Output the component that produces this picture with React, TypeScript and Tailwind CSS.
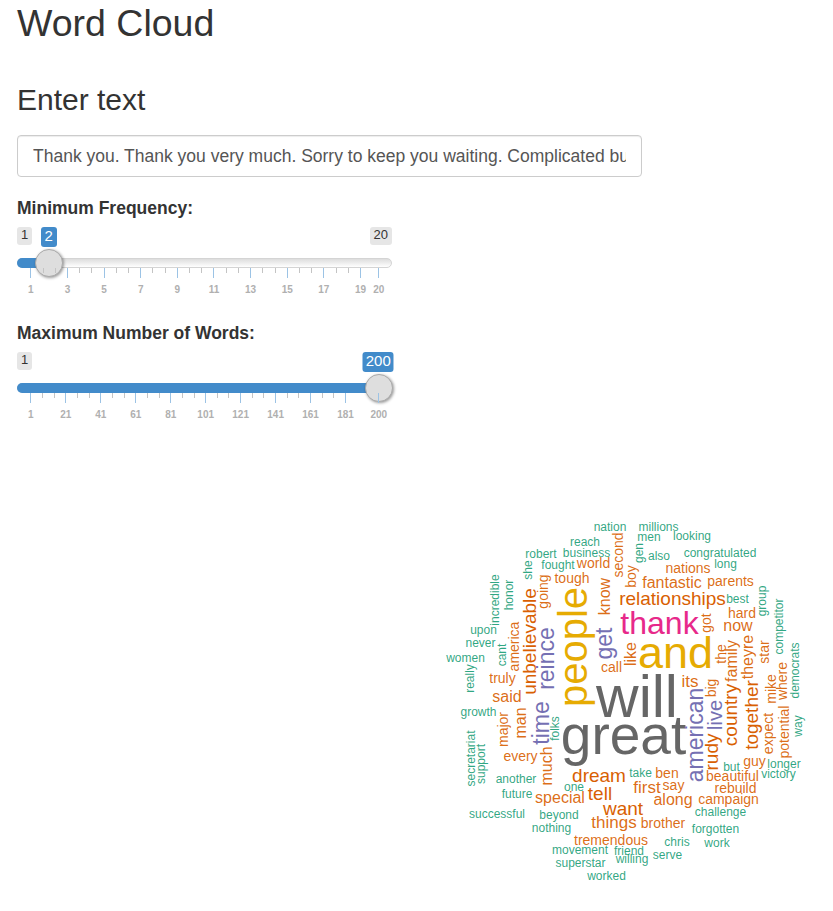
type Word = [string, number, number, number, string];

const G = "#1B9E77";
const O = "#D95F02";
const P = "#7570B3";

// [text, center x, baseline y, font size, colour]
const FLAT: Word[] = [
  ["nation", 610, 531, 12, G],
  ["millions", 658.5, 531, 12, G],
  ["men", 649, 541, 12, G],
  ["looking", 692, 540, 12, G],
  ["reach", 585, 546, 12, G],
  ["robert", 541, 558, 12, G],
  ["business", 586.5, 557, 12, G],
  ["fought", 558, 569, 12, G],
  ["world", 593.5, 568, 14, O],
  ["tough", 572, 583, 14, O],
  ["also", 659, 560, 12, G],
  ["congratulated", 720, 557, 12, G],
  ["long", 725.5, 568, 12, G],
  ["nations", 688, 573, 14, O],
  ["fantastic", 672, 588, 16, O],
  ["parents", 730.5, 586, 14, O],
  ["relationships", 672.5, 605, 19, O],
  ["best", 737.5, 603, 12, G],
  ["hard", 742, 618, 14, O],
  ["now", 738, 631, 16, O],
  ["thank", 659.5, 634, 32, "#E7298A"],
  ["and", 675.5, 668, 45, "#E6AB02"],
  ["its", 690, 687, 17, O],
  ["upon", 483.5, 634, 12, G],
  ["never", 480.5, 647, 12, G],
  ["women", 465.5, 662, 12, G],
  ["call", 611.5, 672, 14, O],
  ["truly", 502.5, 683, 14, O],
  ["said", 507, 702, 16, O],
  ["growth", 478.5, 716, 12, G],
  ["every", 520.5, 761, 14, O],
  ["another", 516, 783, 12, G],
  ["future", 517, 798, 12, G],
  ["one", 574, 791, 12, G],
  ["dream", 599, 782, 19, O],
  ["tell", 600, 800, 19, O],
  ["special", 560, 803, 16, O],
  ["want", 623, 815, 19, O],
  ["things", 614, 828, 17, O],
  ["successful", 497, 818, 12, G],
  ["beyond", 559, 819, 12, G],
  ["nothing", 551.5, 832, 12, G],
  ["tremendous", 611, 845, 14, O],
  ["movement", 580, 854, 12, G],
  ["friend", 629, 855, 12, G],
  ["willing", 632, 863, 12, G],
  ["superstar", 580.5, 867, 12, G],
  ["worked", 606.5, 880, 12, G],
  ["take", 640.5, 777, 12, G],
  ["ben", 667, 778, 14, O],
  ["first", 647, 793, 17, O],
  ["say", 673.5, 790, 14, O],
  ["along", 673, 805, 16, O],
  ["campaign", 728.5, 804, 14, O],
  ["brother", 663, 828, 14, O],
  ["rebuild", 735.5, 793, 14, O],
  ["beautiful", 732.5, 781, 14, O],
  ["guy", 754.5, 766, 14, O],
  ["but", 731.5, 771, 12, G],
  ["longer", 784, 768, 12, G],
  ["victory", 778.5, 778, 12, G],
  ["challenge", 720.5, 816, 12, G],
  ["forgotten", 715.5, 833, 12, G],
  ["chris", 677, 846, 12, G],
  ["work", 717, 847, 12, G],
  ["serve", 667.5, 859, 12, G],
  ["great", 623.5, 754, 55, "#666666"],
  ["will", 637, 717, 59, "#666666"],
];

// [text, baseline x, center y, font size, colour] - read upward
const UPRIGHT: Word[] = [
  ["second", 623, 555, 14, O],
  ["gen", 643, 553, 12, G],
  ["boy", 636, 576.5, 14, O],
  ["she", 532, 570, 12, G],
  ["incredible", 499, 600, 12, G],
  ["honor", 513, 595, 12, G],
  ["going", 548, 591.5, 14, O],
  ["unbelievable", 536, 641.5, 19, O],
  ["people", 587, 647, 40, "#E6AB02"],
  ["reince", 554, 658.5, 23, P],
  ["america", 519, 646.5, 14, O],
  ["cant", 506, 655, 12, G],
  ["really", 474, 678.5, 12, G],
  ["know", 610, 596.5, 16, O],
  ["get", 612, 643.5, 23, P],
  ["like", 636, 654, 16, O],
  ["got", 711, 623, 14, O],
  ["the", 726, 654, 14, O],
  ["family", 737, 661, 16, O],
  ["country", 737, 715, 19, O],
  ["theyre", 753, 657, 16, O],
  ["together", 758, 715, 19, O],
  ["star", 769, 652, 14, O],
  ["mike", 776, 689, 14, O],
  ["where", 787, 681, 14, O],
  ["group", 766, 601, 12, G],
  ["competitor", 783, 626.5, 12, G],
  ["democrats", 799, 670.5, 12, G],
  ["big", 716, 688, 14, O],
  ["american", 703, 735, 23, P],
  ["live", 722, 715, 20, P],
  ["rudy", 718, 752, 19, O],
  ["expect", 773, 733.5, 14, O],
  ["potential", 789, 732, 14, O],
  ["way", 802, 726, 12, G],
  ["folks", 559, 728.5, 12, G],
  ["time", 549, 723, 23, P],
  ["much", 552, 766, 16, O],
  ["man", 526, 723, 16, O],
  ["major", 508, 729.5, 14, O],
  ["secretariat", 475, 758.5, 12, G],
  ["support", 485, 764, 12, G],
];

// small words come out a bit lighter in the plot
const soft = (size: number) => (size <= 17 ? 0.92 : 1);

function WordCloud() {
  return (
    <svg viewBox="0 490 833 421" className="block h-[421px] w-[833px]">
      {FLAT.map(([text, x, y, size, color]) => (
        <text key={text} x={x} y={y} fontSize={size} fill={color} fillOpacity={soft(size)} textAnchor="middle">
          {text}
        </text>
      ))}
      {UPRIGHT.map(([text, x, y, size, color]) => (
        <text
          key={text}
          transform={`translate(${x} ${y}) rotate(-90)`}
          fontSize={size}
          fill={color}
          fillOpacity={soft(size)}
          textAnchor="middle"
        >
          {text}
        </text>
      ))}
    </svg>
  );
}

function Slider({
  label,
  min,
  max,
  value,
  marks,
}: {
  label: string;
  min: number;
  max: number;
  value: number;
  marks: number[];
}) {
  const toX = (v: number) => 13.3 + ((v - min) * 348) / (max - min);
  const minor: number[] = [];
  marks.slice(0, -2).forEach((m, i) => {
    const step = (toX(marks[i + 1]) - toX(m)) / 3;
    minor.push(toX(m) + step, toX(m) + step * 2);
  });
  const handle = toX(value);

  return (
    <div className="w-[375px]">
      <label className="block h-[22px] text-[17.5px] font-bold leading-[22px] text-[#333]">{label}</label>
      <div className="relative mt-[8px]">
        <div className="flex h-[18px] items-start justify-between text-[13px] leading-[16px] text-[#333]">
          <span className="rounded-[3px] bg-[#e6e6e6] px-1 pb-[2px]">{min}</span>
          {value !== max && <span className="rounded-[3px] bg-[#e6e6e6] px-1 pb-[2px]">{max}</span>}
        </div>
        <span
          className="absolute top-0 h-[20px] min-w-[16px] -translate-x-1/2 rounded-[3px] bg-[#428bca] px-[3px] text-center text-[15px] leading-[18px] text-white"
          style={{ left: handle }}
        >
          {value}
        </span>

        <div className="relative mt-[13px] h-[10px] rounded-[5px] border border-[#d4d4d4] bg-gradient-to-b from-[#dddddd] to-white">
          <div
            className="absolute -left-px -top-px h-[10px] rounded-l-[5px] bg-[#428bca]"
            style={{ width: handle }}
          />
          <div
            className="absolute -top-[10px] h-[28px] w-[28px] -translate-x-1/2 rounded-full border border-[#aaaaaa] bg-[#dedede] shadow-[1px_1px_3px_rgba(0,0,0,0.4)]"
            style={{ left: handle - 0.5 }}
          />
        </div>

        <div className="relative h-[34px]">
          {minor.map((x) => (
            <div key={x} className="absolute top-0 h-[5px] w-px bg-[#c4c4c4]" style={{ left: x }} />
          ))}
          {marks.map((m) => (
            <div key={m}>
              <div className="absolute top-0 h-[10px] w-px bg-[#9cc3e5]" style={{ left: toX(m) }} />
              <span
                className="absolute top-[15px] -translate-x-1/2 text-[10px] font-bold leading-[14px] text-[#b0b0b0]"
                style={{ left: toX(m) + 0.5 }}
              >
                {m}
              </span>
            </div>
          ))}
        </div>
      </div>
    </div>
  );
}

export default function App() {
  return (
    <div className="h-[911px] w-[833px] overflow-hidden bg-white font-['Liberation_Sans',Arial,sans-serif] text-[#333]">
      <div className="h-[490px] px-[17px] pt-[3px]">
        <h1 className="text-[37.5px] font-normal leading-[40px]">Word Cloud</h1>
        <h2 className="mt-[40px] text-[30px] font-normal leading-[33px]">Enter text</h2>
        <input
          readOnly
          value="Thank you. Thank you very much. Sorry to keep you waiting. Complicated business, complicated."
          className="mt-[19px] block h-[42px] w-[625px] rounded-[4px] border border-[#cccccc] px-[15px] text-[17.5px] text-[#555] shadow-[inset_0_1px_1px_rgba(0,0,0,0.075)]"
        />
        <div className="mt-[20px] flex flex-col gap-[20px]">
          <Slider
            label="Minimum Frequency:"
            min={1}
            max={20}
            value={2}
            marks={[1, 3, 5, 7, 9, 11, 13, 15, 17, 19, 20]}
          />
          <Slider
            label="Maximum Number of Words:"
            min={1}
            max={200}
            value={200}
            marks={[1, 21, 41, 61, 81, 101, 121, 141, 161, 181, 200]}
          />
        </div>
      </div>
      <WordCloud />
    </div>
  );
}
